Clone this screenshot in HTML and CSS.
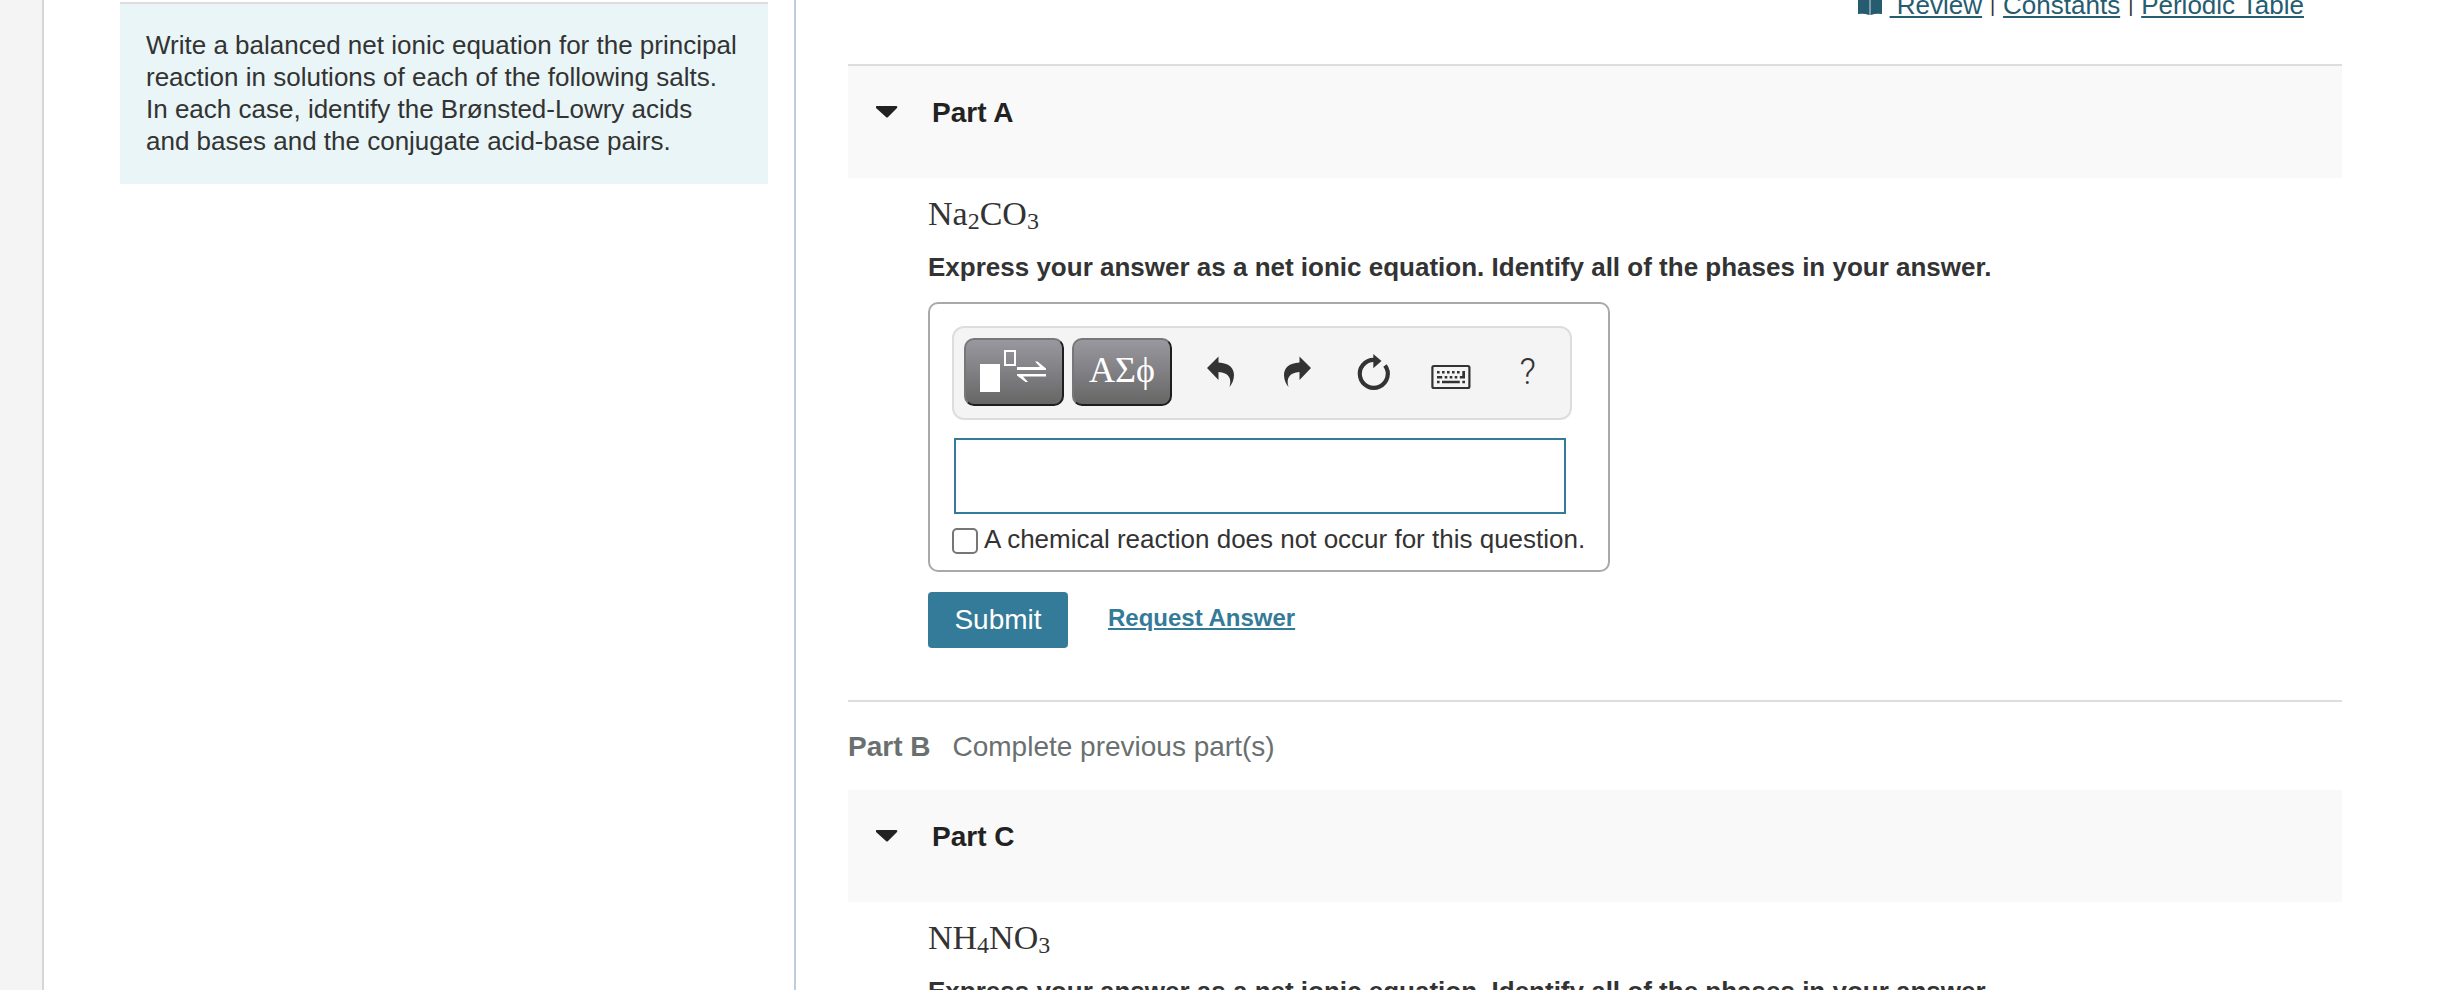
FILE: index.html
```html
<!DOCTYPE html>
<html lang="en">

<head>
  <meta charset="UTF-8">
  <meta name="viewport" content="width=device-width, initial-scale=1.0">
  <title>Net ionic equations</title>
  <link rel="stylesheet" href="styles.css">
</head>

<body>
  <div class="page">
    <div class="gutter"></div>

    <aside class="sidebar">
      <p class="problem">Write a balanced net ionic equation for the principal reaction in solutions of each of the following salts. In each case, identify the Brønsted-Lowry acids and bases and the conjugate acid-base pairs.</p>
    </aside>

    <main class="content">
      <nav class="resources">
        <svg class="book" viewBox="0 0 24 24" aria-hidden="true">
          <path d="M0 1 Q7 -1 11 1 V24 Q6 22 0 23Z M13 1 Q17 -1 24 1 V23 Q18 22 13 24Z" />
          <path class="spine" d="M11 1 H13 V24 H11Z" />
        </svg>
        <a href="#">&nbsp;Review</a>
        <span class="bar">|</span>
        <a href="#">Constants</a>
        <span class="bar">|</span>
        <a href="#">Periodic Table</a>
      </nav>

      <section class="part">
        <button class="part-header ruled" type="button">
          <svg class="caret" viewBox="0 0 22 12" aria-hidden="true"><path d="M1 0 H20 Q22 0 21 2 L12 11 Q11 12 10 11 L0 2 Q-1 0 1 0Z" /></svg>
          <span>Part A</span>
        </button>

        <div class="part-body">
          <p class="formula">Na<sub>2</sub>CO<sub>3</sub></p>
          <p class="instructions">Express your answer as a net ionic equation. Identify all of the phases in your answer.</p>

          <form class="answer">
            <div class="answer-box">
              <div class="toolbar">
                <button class="palette" type="button" aria-label="Templates">
                  <svg viewBox="0 0 96 64">
                    <path fill="#fff" d="M14 24 H34 V52 H14Z" />
                    <path fill="none" stroke="#fff" stroke-width="2" d="M39 11 H49 V25 H39Z" />
                    <path fill="#fff" d="M51 27 H74 L69 21.5 H71.5 L80 28.5 V30 H51Z M80 34 V36.5 H57 L62 42 H59.5 L51 35.5 V34Z" />
                  </svg>
                </button>
                <button class="palette greek" type="button">ΑΣϕ</button>
                <div class="tools">
                  <button class="tool" type="button" aria-label="Undo">
                    <svg viewBox="0 0 40 40"><path d="M7 16 L18.5 4.5 V10.5 C29 11 34 16 34 23 C34 28 32 32 29.5 35 C32 27 29 20.5 18.5 20 V28Z" /></svg>
                  </button>
                  <button class="tool" type="button" aria-label="Redo">
                    <svg viewBox="0 0 40 40"><path d="M34 16 L22.5 4.5 V10.5 C12 11 7 16 7 23 C7 28 9 32 11.5 35 C9 27 12 20.5 22.5 20 V28Z" /></svg>
                  </button>
                  <button class="tool" type="button" aria-label="Reset">
                    <svg viewBox="0 0 40 40">
                      <path fill="none" stroke="#333" stroke-width="4.2" d="M31 13.4 A14 14 0 1 1 20 7.8" />
                      <path d="M19.3 2 L27.5 9 L19.3 16.3Z" />
                    </svg>
                  </button>
                  <button class="tool" type="button" aria-label="Keyboard shortcuts">
                    <svg viewBox="0 0 40 40">
                      <rect x="1.4" y="14" width="37" height="22" rx="1.5" fill="none" stroke="#333" stroke-width="2.2" />
                      <path d="M6 19h2.6v2.6H6z M11 19h2.6v2.6H11z M16 19h2.6v2.6H16z M21 19h2.6v2.6H21z M26 19h2.6v2.6H26z M31.3 19h2.7v7.4h-5.2v-2.5h2.5z M6 24h5.2v2.4H6z M13.7 24h2.6v2.4h-2.6z M18.7 24h2.6v2.4h-2.6z M23.7 24h2.6v2.4h-2.6z M6 28.8h2.6v2.5H6z M11 28.8h17.8v2.5H11z M31.3 28.8h2.7v2.5h-2.7z" />
                    </svg>
                  </button>
                  <button class="tool help" type="button">?</button>
                </div>
              </div>

              <input class="equation" type="text" aria-label="Answer">

              <div class="no-reaction">
                <input id="no-reaction" type="checkbox">
                <label for="no-reaction">A chemical reaction does not occur for this question.</label>
              </div>
            </div>

            <div class="actions">
              <button class="submit" type="button">Submit</button>
              <a class="request" href="#">Request Answer</a>
            </div>
          </form>
        </div>
      </section>

      <section class="part-locked">
        <strong>Part B</strong>
        <span>Complete previous part(s)</span>
      </section>

      <section class="part">
        <button class="part-header" type="button">
          <svg class="caret" viewBox="0 0 22 12" aria-hidden="true"><path d="M1 0 H20 Q22 0 21 2 L12 11 Q11 12 10 11 L0 2 Q-1 0 1 0Z" /></svg>
          <span>Part C</span>
        </button>

        <div class="part-body">
          <p class="formula">NH<sub>4</sub>NO<sub>3</sub></p>
          <p class="instructions">Express your answer as a net ionic equation. Identify all of the phases in your answer.</p>
        </div>
      </section>
    </main>
  </div>
</body>

</html>
```
FILE: styles.css
```css
* {
  box-sizing: border-box;
}

html,
body {
  height: 100%;
}

body {
  margin: 0;
  overflow: hidden;
  background: #fff;
  color: #333;
  font-family: "Liberation Sans", Arial, sans-serif;
  font-size: 26px;
  line-height: 32px;
}

p {
  margin: 0;
}

button,
input {
  font: inherit;
  margin: 0;
}

.page {
  display: grid;
  grid-template-columns: 44px minmax(0, 752fr) minmax(0, 1648fr);
  height: 100%;
  overflow: hidden;
}

.gutter {
  background: #f4f4f4;
  border-right: 2px solid #d6d6d6;
}

.sidebar {
  padding: 2px 26px 0 76px;
  border-right: 2px solid #c0cbdb;
}

.problem {
  padding: 25px 26px 27px;
  border-top: 2px solid #ddd;
  background: #e9f5f7;
}

.content {
  padding: 0 102px 0 52px;
}

/* scrolled partly out of view */
.resources {
  display: flex;
  justify-content: flex-end;
  align-items: center;
  gap: 8px;
  height: 32px;
  margin: -11px 38px 43px 0;
}

.resources a {
  color: #255c70;
  text-decoration-thickness: 2px;
  text-underline-offset: 2px;
}

.bar {
  width: 5px;
  font-size: 20px;
}

.book {
  width: 24px;
  height: 24px;
  margin-bottom: 4px;
  fill: #255c70;
}

.book .spine {
  fill: #7b9ba8;
}

.part-header {
  display: flex;
  align-items: flex-start;
  gap: 34px;
  width: 100%;
  height: 112px;
  padding: 31px 28px;
  border: 0;
  background: #f9f9f9;
  color: #222;
  font-size: 28px;
  font-weight: bold;
  text-align: left;
}

.part-header.ruled {
  height: 114px;
  border-top: 2px solid #ddd;
}

.caret {
  width: 22px;
  height: 12px;
  margin-top: 9px;
  fill: #222;
}

.part-body {
  padding: 20px 0 0 80px;
}

.formula {
  height: 40px;
  font-family: "Liberation Serif", "Times New Roman", serif;
  font-size: 34px;
  line-height: 32px;
}

.formula sub {
  font-size: 24px;
  line-height: 0;
  vertical-align: -4px;
}

.instructions {
  padding: 13px 0 19px;
  font-weight: bold;
}

.answer-box {
  width: 682px;
  padding: 22px;
  border: 2px solid #a9a9a9;
  border-radius: 10px;
}

.toolbar {
  display: flex;
  gap: 8px;
  width: 620px;
  height: 94px;
  padding: 10px;
  border: 2px solid #ddd;
  border-radius: 12px;
  background: #f4f4f4;
}

.palette {
  width: 100px;
  height: 68px;
  padding: 0;
  border: 2px solid;
  border-color: #777 #1e1e1e #1e1e1e #777;
  border-radius: 10px;
  background: linear-gradient(#9a989f, #666);
  color: #fff;
}

.palette svg {
  display: block;
  width: 96px;
  height: 64px;
}

.greek {
  padding-bottom: 4px;
  font-family: "Liberation Serif", "Times New Roman", serif;
  font-size: 36px;
}

.tools {
  display: flex;
  flex: 1;
  margin: 0 -6px 0 2px;
}

.tool {
  flex: 1;
  display: flex;
  justify-content: center;
  align-items: center;
  height: 68px;
  padding: 0;
  border: 0;
  background: none;
  color: #333;
}

.tool svg {
  width: 40px;
  height: 40px;
  fill: #333;
}

.help {
  font-family: Roboto, sans-serif;
  font-size: 36px;
  font-weight: 300;
}

.equation {
  display: block;
  width: 612px;
  height: 76px;
  margin: 18px 2px 12px;
  padding: 0 12px;
  border: 2px solid #347a99;
  background: #fff;
}

.no-reaction {
  display: flex;
  align-items: center;
  gap: 6px;
  height: 30px;
  margin-bottom: -8px;
  white-space: nowrap;
}

.no-reaction input {
  appearance: none;
  flex: none;
  width: 26px;
  height: 26px;
  border: 2px solid #767676;
  border-radius: 5px;
  background: #fff;
}

.no-reaction label {
  padding-bottom: 4px;
}

.actions {
  display: flex;
  align-items: center;
  gap: 40px;
  margin-top: 20px;
}

.submit {
  width: 140px;
  height: 56px;
  padding: 0;
  border: 0;
  border-radius: 4px;
  background: #347a99;
  color: #fff;
  font-size: 28px;
}

.request {
  padding-bottom: 4px;
  color: #347a99;
  font-size: 24px;
  font-weight: bold;
  text-decoration-thickness: 2px;
  text-underline-offset: 2px;
}

.part-locked {
  display: flex;
  gap: 22px;
  height: 90px;
  margin-top: 52px;
  padding-top: 29px;
  border-top: 2px solid #ddd;
  color: #6a7070;
  font-size: 28px;
}
```
